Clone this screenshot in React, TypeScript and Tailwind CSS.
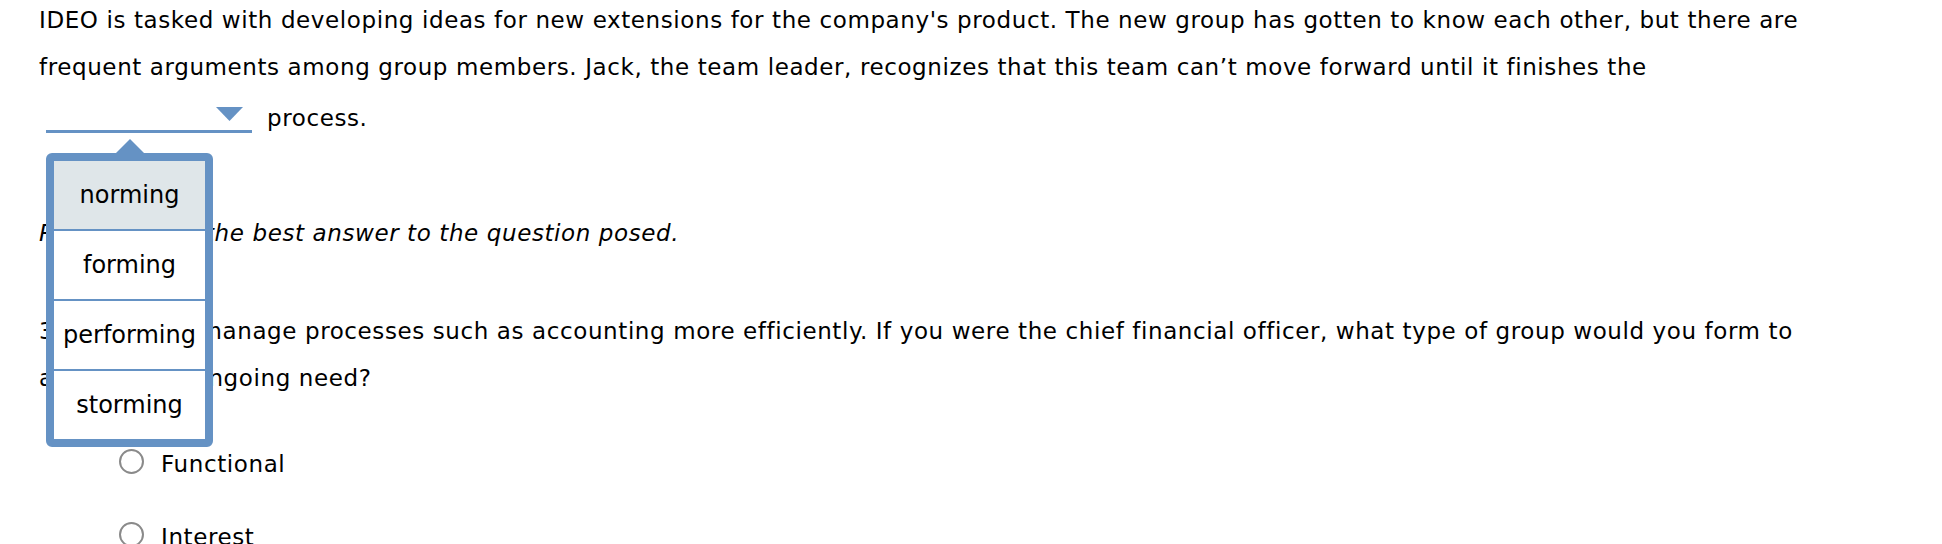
import React from "react";

const options = ["norming", "forming", "performing", "storming"];

function Dropdown() {
  return (
    <span className="relative ml-[7px] inline-block h-[30px] w-[206px] align-[-7px]">
      <span className="absolute bottom-0 left-0 right-0 h-[3px] bg-[#6592c4]" />
      <svg className="absolute right-[9px] top-[4px]" width="27" height="14" viewBox="0 0 27 14">
        <polygon points="0,0 27,0 13.5,14" fill="#6592c4" />
      </svg>
      <div className="absolute left-0 top-[36px] z-10 w-[167px] tracking-normal">
        <svg className="mx-auto block" width="28" height="14" viewBox="0 0 28 14">
          <polygon points="0,14 14,0 28,14" fill="#6592c4" />
        </svg>
        <ul className="overflow-hidden rounded-[6px] border-[8px] border-[#6592c4] bg-white">
          {options.map((o, i) => (
            <li
              key={o}
              className={
                "flex items-center justify-center text-[24px] text-black " +
                (i === 0 ? "h-[68px] bg-[#dfe6e9]" : "h-[70px] border-t-2 border-[#6592c4]")
              }
            >
              {o}
            </li>
          ))}
        </ul>
      </div>
    </span>
  );
}

function Radio({ label }: { label: string }) {
  return (
    <label className="flex h-[47px] items-center gap-[17px]">
      <span className="-mt-[7px] inline-block h-[25px] w-[25px] rounded-full border-2 border-[#8a8a8a] bg-white" />
      <span>{label}</span>
    </label>
  );
}

export default function App() {
  return (
    <div
      className="h-[544px] overflow-hidden bg-white px-[39px] text-[23px] leading-[47px] tracking-[0.6px] text-black"
      style={{ fontFamily: '"DejaVu Sans", Verdana, sans-serif' }}
    >
      <p className="-mt-[3px]">
        IDEO is tasked with developing ideas for new extensions for the company's product. The new group has
        gotten to know each other, but there are
        <br />
        frequent arguments among group members. Jack, the team leader, recognizes that this team can’t move
        forward until it finishes the
      </p>
      <div className="pt-[4px]">
        <Dropdown />
        <span className="ml-[15px]">process.</span>
      </div>

      <p className="mt-[68px] italic">Please select the best answer to the question posed.</p>

      <p className="mt-[51px]">
        3. We aim to manage processes such as accounting more efficiently. If you were the chief financial
        officer, what type of group would you form to
        <br />
        address this ongoing need?
      </p>

      <div className="ml-[80px] mt-[39px] flex flex-col gap-[26px]">
        <Radio label="Functional" />
        <Radio label="Interest" />
      </div>
    </div>
  );
}
